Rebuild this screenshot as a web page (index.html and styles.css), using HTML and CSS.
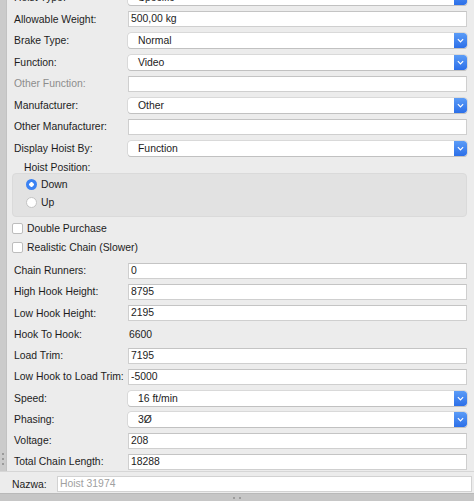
FILE: index.html
```html
<!DOCTYPE html>
<html>
<head>
<meta charset="utf-8">
<link rel="stylesheet" href="styles.css">
</head>
<body>
<div class="window">
  <div class="main">
    <div class="lstrip"><span class="grip"></span><span class="grip"></span><span class="grip"></span></div>
    <div class="panel">
      <div class="form">
        <div class="row"><div class="lbl">Hoist Type:</div><div class="sel"><span class="val">Specific</span><span class="btn"><svg viewBox="0 0 8 5" width="7" height="5"><path d="M1 1 L4 4 L7 1" fill="none" stroke="#fff" stroke-width="1.4"/></svg></span></div></div>
        <div class="row"><div class="lbl">Allowable Weight:</div><div class="inp">500,00 kg</div></div>
        <div class="row"><div class="lbl">Brake Type:</div><div class="sel"><span class="val">Normal</span><span class="btn"><svg viewBox="0 0 8 5" width="7" height="5"><path d="M1 1 L4 4 L7 1" fill="none" stroke="#fff" stroke-width="1.4"/></svg></span></div></div>
        <div class="row"><div class="lbl">Function:</div><div class="sel"><span class="val">Video</span><span class="btn"><svg viewBox="0 0 8 5" width="7" height="5"><path d="M1 1 L4 4 L7 1" fill="none" stroke="#fff" stroke-width="1.4"/></svg></span></div></div>
        <div class="row"><div class="lbl dis">Other Function:</div><div class="inp"></div></div>
        <div class="row"><div class="lbl">Manufacturer:</div><div class="sel"><span class="val">Other</span><span class="btn"><svg viewBox="0 0 8 5" width="7" height="5"><path d="M1 1 L4 4 L7 1" fill="none" stroke="#fff" stroke-width="1.4"/></svg></span></div></div>
        <div class="row"><div class="lbl">Other Manufacturer:</div><div class="inp"></div></div>
        <div class="row"><div class="lbl">Display Hoist By:</div><div class="sel"><span class="val">Function</span><span class="btn"><svg viewBox="0 0 8 5" width="7" height="5"><path d="M1 1 L4 4 L7 1" fill="none" stroke="#fff" stroke-width="1.4"/></svg></span></div></div>
        <div class="grouptitle">Hoist Position:</div>
        <div class="group">
          <div class="radiorow"><span class="radio on"></span><span>Down</span></div>
          <div class="radiorow"><span class="radio"></span><span>Up</span></div>
        </div>
        <div class="checks">
          <div class="checkrow"><span class="check"></span><span>Double Purchase</span></div>
          <div class="checkrow"><span class="check"></span><span>Realistic Chain (Slower)</span></div>
        </div>
        <div class="row t"><div class="lbl">Chain Runners:</div><div class="inp">0</div></div>
        <div class="row t"><div class="lbl">High Hook Height:</div><div class="inp">8795</div></div>
        <div class="row t"><div class="lbl">Low Hook Height:</div><div class="inp">2195</div></div>
        <div class="row t"><div class="lbl">Hook To Hook:</div><div class="plain">6600</div></div>
        <div class="row t"><div class="lbl">Load Trim:</div><div class="inp">7195</div></div>
        <div class="row t"><div class="lbl">Low Hook to Load Trim:</div><div class="inp">-5000</div></div>
        <div class="row t"><div class="lbl">Speed:</div><div class="sel"><span class="val">16 ft/min</span><span class="btn"><svg viewBox="0 0 8 5" width="7" height="5"><path d="M1 1 L4 4 L7 1" fill="none" stroke="#fff" stroke-width="1.4"/></svg></span></div></div>
        <div class="row t"><div class="lbl">Phasing:</div><div class="sel"><span class="val">3Ø</span><span class="btn"><svg viewBox="0 0 8 5" width="7" height="5"><path d="M1 1 L4 4 L7 1" fill="none" stroke="#fff" stroke-width="1.4"/></svg></span></div></div>
        <div class="row t"><div class="lbl">Voltage:</div><div class="inp">208</div></div>
        <div class="row t"><div class="lbl">Total Chain Length:</div><div class="inp">18288</div></div>
      </div>
    </div>
  </div>
  <div class="footer">
    <div class="flbl">Nazwa:</div>
    <div class="finp">Hoist 31974</div>
  </div>
  <div class="bottombar"><span class="dot"></span><span class="dot"></span></div>
</div>
</body>
</html>
```

FILE: styles.css
```css
html, body {
  margin: 0;
  padding: 0;
}
body {
  width: 474px;
  height: 501px;
  overflow: hidden;
  background: #ececec;
  font-family: "Liberation Sans", Arial, sans-serif;
  font-size: 10.4px;
  color: #1c1c1c;
}
.window {
  display: flex;
  flex-direction: column;
  height: 501px;
}
.main {
  flex: 1;
  display: flex;
  overflow: hidden;
  min-height: 0;
}
.lstrip {
  width: 7px;
  background: #cbcbcb;
  border-right: 1px solid #c2c2c2;
  box-sizing: border-box;
  display: flex;
  flex-direction: column;
  justify-content: flex-end;
  align-items: center;
  gap: 3px;
  padding-bottom: 6px;
}
.grip {
  width: 2px;
  height: 2px;
  border-radius: 1px;
  background: #8a8a8a;
}
.panel {
  flex: 1;
  padding: 0 7px 0 5px;
  overflow: hidden;
}
.form {
  margin-top: -13.25px;
}
.row {
  height: 21.5px;
  display: flex;
  align-items: center;
}
.row.t {
  height: 21.25px;
}
.lbl {
  width: 114px;
  padding-left: 2px;
  flex: none;
  white-space: nowrap;
}
.lbl.dis {
  color: #8c8c8c;
}
.inp {
  flex: 1;
  height: 16px;
  box-sizing: border-box;
  background: #fff;
  border: 1px solid #cfcfcf;
  border-top-color: #c4c4c4;
  padding-left: 2px;
  line-height: 14px;
}
.plain {
  flex: 1;
  padding-left: 1px;
}
.sel {
  flex: 1;
  height: 15px;
  box-sizing: border-box;
  background: #fff;
  border-radius: 3px;
  box-shadow: 0 0 0 0.5px #c6c6c6, 0 1px 0 #bdbdbd;
  display: flex;
  align-items: center;
  overflow: hidden;
}
.sel .val {
  flex: 1;
  padding-left: 10px;
}
.btn {
  width: 13px;
  height: 15px;
  background: linear-gradient(#5b9cf7, #2c6fe8);
  border-radius: 0 3px 3px 0;
  display: flex;
  align-items: center;
  justify-content: center;
}
.grouptitle {
  height: 14.5px;
  line-height: 18px;
  padding-left: 12px;
}
.group {
  height: 44px;
  box-sizing: border-box;
  background: #e2e2e2;
  border: 1px solid #dadada;
  border-radius: 4px;
  padding: 0 0 0 13px;
}
.radiorow {
  height: 18.5px;
  display: flex;
  align-items: center;
  gap: 4px;
}
.radiorow:first-child {
  margin-top: 0.5px;
}
.radio {
  width: 11px;
  height: 11px;
  box-sizing: border-box;
  border-radius: 50%;
  background: #fff;
  border: 1px solid #c3c3c3;
}
.radio.on {
  border: none;
  background: radial-gradient(circle, #fff 0 2px, #3b82f3 2.5px);
}
.checks {
  padding-top: 1.25px;
  padding-bottom: 3.5px;
}
.checkrow {
  height: 19px;
  display: flex;
  align-items: center;
  gap: 4px;
}
.check {
  width: 11px;
  height: 11px;
  box-sizing: border-box;
  background: #fff;
  border: 1px solid #bdbdbd;
  border-radius: 2px;
}
.footer {
  height: 22px;
  flex: none;
  box-sizing: border-box;
  border-top: 1px solid #d6d6d6;
  display: flex;
  align-items: center;
  padding: 3px 2px 0 12px;
  background: #ececec;
}
.flbl {
  width: 45px;
  flex: none;
}
.finp {
  flex: 1;
  height: 16px;
  box-sizing: border-box;
  background: #fff;
  border: 1px solid #d2d2d2;
  color: #a0a0a0;
  padding-left: 2px;
  line-height: 14px;
}
.bottombar {
  height: 8px;
  flex: none;
  box-sizing: border-box;
  background: #c6c6c6;
  border-top: 1px solid #b9b9b9;
  display: flex;
  justify-content: center;
  align-items: center;
  gap: 4px;
}
.dot {
  width: 2px;
  height: 2px;
  border-radius: 1px;
  background: #8e8e8e;
}
```
